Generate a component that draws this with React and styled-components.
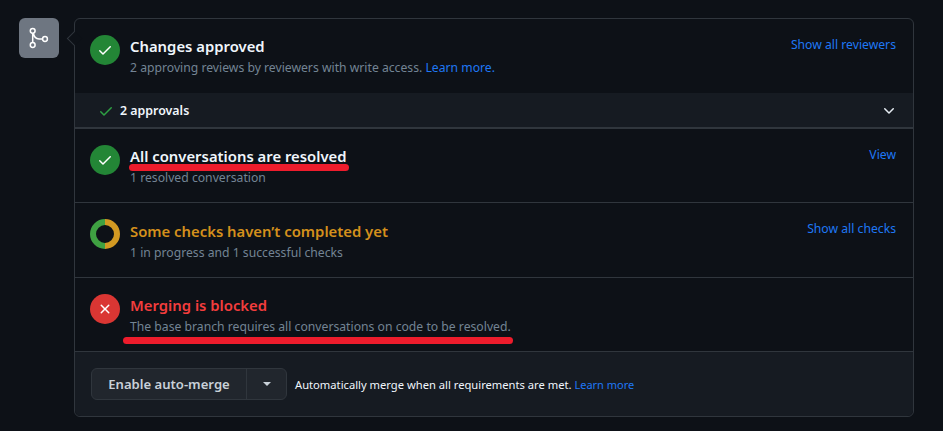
import React from "react";
import styled, { createGlobalStyle } from "styled-components";

const Global = createGlobalStyle`
  html, body { margin: 0; background: #0d1117; }
  body { font-family: "Noto Sans", "Open Sans", "Liberation Sans", sans-serif; overflow: hidden; }
  #root { width: 943px; height: 431px; }
`;

const Page = styled.div`
  display: flex;
  align-items: flex-start;
  gap: 15px;
  padding: 18px 29px 14px 19px;
  box-sizing: border-box;
  height: 431px;
  background: #0d1117;
`;

const BranchBadge = styled.div`
  width: 40px;
  height: 40px;
  flex: none;
  border-radius: 6px;
  background: #6e7681;
  display: flex;
  align-items: center;
  justify-content: center;
  color: #fff;
`;

const Panel = styled.div`
  position: relative;
  flex: 1;
  height: 399px;
  box-sizing: border-box;
  border: 1px solid #30363d;
  border-radius: 6px;
  display: flex;
  flex-direction: column;
  &::before {
    content: "";
    position: absolute;
    left: -6px;
    top: 14px;
    width: 10px;
    height: 10px;
    background: #0d1117;
    border-left: 1px solid #30363d;
    border-bottom: 1px solid #30363d;
    transform: rotate(45deg);
  }
`;

const Section = styled.div`
  position: relative;
  height: ${(p) => p.$h}px;
  flex: none;
  box-sizing: border-box;
  padding: 16px 17px 0 15px;
  display: flex;
  gap: 10px;
  border-bottom: ${(p) => (p.$border ? "1px solid #30363d" : "none")};
`;

const StatusDot = styled.div`
  width: 30px;
  height: 30px;
  flex: none;
  border-radius: 50%;
  background: ${(p) => p.$bg};
  display: flex;
  align-items: center;
  justify-content: center;
  color: #fff;
`;

const Body = styled.div`
  flex: 1;
  min-width: 0;
  padding-top: ${(p) => p.$top || 0}px;
`;

const Title = styled.div`
  font-size: 14.85px;
  font-weight: 600;
  line-height: 22px;
  color: ${(p) => p.$color || "#f0f6fc"};
`;

const Sub = styled.div`
  font-size: 12.2px;
  line-height: 18px;
  margin-top: 2px;
  color: #738494;
`;

const Link = styled.a`
  color: #1f78f5;
  font-size: ${(p) => p.$size || 12.2}px;
`;

const SideLink = styled(Link)`
  flex: none;
  line-height: 18px;
  margin-top: ${(p) => p.$mt || 0}px;
`;

const ApprovalsRow = styled.div`
  height: 36px;
  flex: none;
  box-sizing: border-box;
  background: #161b22;
  border-bottom: 2px solid #30363d;
  display: flex;
  align-items: center;
  padding: 1px 16px 0 23px;
  gap: 6px;
  color: #f0f6fc;
  font-size: 12.4px;
  font-weight: 600;
  & > span { flex: 1; }
`;

const GreenTick = styled.span`
  flex: none !important;
  display: flex;
  color: #2ea043;
`;

const Footer = styled.div`
  flex: 1;
  background: #161b22;
  border-radius: 0 0 6px 6px;
  display: flex;
  align-items: center;
  padding: 0 16px;
  gap: 8px;
  font-size: 11.2px;
  color: #f0f6fc;
`;

const SplitButton = styled.div`
  display: flex;
  height: 32px;
  box-sizing: border-box;
  border: 1px solid #30363d;
  border-radius: 6px;
  background: #21262d;
  color: #c9d1d9;
  font-size: 13.1px;
  font-weight: 600;
`;

const ButtonMain = styled.div`
  width: 154px;
  display: flex;
  align-items: center;
  justify-content: center;
  border-right: 1px solid #30363d;
`;

const Caret = styled.div`
  width: 39px;
  display: flex;
  align-items: center;
  justify-content: center;
  &::after {
    content: "";
    border-left: 4px solid transparent;
    border-right: 4px solid transparent;
    border-top: 4px solid #c9d1d9;
  }
`;

const Scribble = styled.div`
  position: absolute;
  left: ${(p) => p.$left}px;
  top: ${(p) => p.$top}px;
  width: ${(p) => p.$w}px;
  height: 7px;
  border-radius: 4px;
  background: #ed1c2c;
`;

const Check = ({ size = 16 }) => (
  <svg width={size} height={size} viewBox="0 0 16 16" fill="currentColor">
    <path d="M13.78 4.22a.75.75 0 0 1 0 1.06l-7.25 7.25a.75.75 0 0 1-1.06 0L2.22 9.28a.751.751 0 0 1 1.06-1.06L6 10.94l6.72-6.72a.75.75 0 0 1 1.06 0Z" />
  </svg>
);

const Cross = () => (
  <svg width="16" height="16" viewBox="0 0 16 16" fill="currentColor">
    <path d="M3.72 3.72a.75.75 0 0 1 1.06 0L8 6.94l3.22-3.22a.749.749 0 1 1 1.06 1.06L9.06 8l3.22 3.22a.749.749 0 1 1-1.06 1.06L8 9.06l-3.22 3.22a.751.751 0 0 1-1.06-1.06L6.94 8 3.72 4.78a.75.75 0 0 1 0-1.06Z" />
  </svg>
);

const Chevron = () => (
  <svg width="16" height="16" viewBox="0 0 16 16" fill="#e6edf3">
    <path d="M12.78 5.22a.749.749 0 0 1 0 1.06l-4.25 4.25a.749.749 0 0 1-1.06 0L3.22 6.28a.749.749 0 1 1 1.06-1.06L8 8.939l3.72-3.719a.749.749 0 0 1 1.06 0Z" />
  </svg>
);

const GitMerge = () => (
  <svg width="24" height="24" viewBox="0 0 24 24" fill="none" stroke="#fff" strokeWidth="1.5">
    <circle cx="5.7" cy="4.8" r="2.4" />
    <circle cx="5.7" cy="19" r="2.4" />
    <circle cx="18" cy="13" r="2.4" />
    <path d="M5.7 7.2v9.4M6.4 7.2c.5 3.4 2.6 5.8 5.6 5.8h3.6" />
  </svg>
);

const Ring = () => (
  <svg width="30" height="30" viewBox="0 0 30 30" fill="none" strokeWidth="6">
    <path d="M15 3a12 12 0 0 1 0 24" stroke="#d29922" />
    <path d="M15 27a12 12 0 0 1 0-24" stroke="#3fa142" />
  </svg>
);

export default function App() {
  return (
    <Page>
      <Global />
      <BranchBadge>
        <GitMerge />
      </BranchBadge>
      <Panel>
        <Section $h={74}>
          <StatusDot $bg="#238636"><Check /></StatusDot>
          <Body>
            <Title>Changes approved</Title>
            <Sub>
              2 approving reviews by reviewers with write access. <Link>Learn more.</Link>
            </Sub>
          </Body>
          <SideLink $mt={1}>Show all reviewers</SideLink>
        </Section>
        <ApprovalsRow>
          <GreenTick><Check /></GreenTick>
          <span>2 approvals</span>
          <Chevron />
        </ApprovalsRow>
        <Section $h={74} $border>
          <StatusDot $bg="#238636"><Check /></StatusDot>
          <Body>
            <Title>All conversations are resolved</Title>
            <Sub>1 resolved conversation</Sub>
          </Body>
          <SideLink $mt={1}>View</SideLink>
          <Scribble $left={54} $top={35} $w={220} />
        </Section>
        <Section $h={75} $border>
          <StatusDot $bg="transparent"><Ring /></StatusDot>
          <Body $top={1}>
            <Title $color="#d4901c">Some checks haven’t completed yet</Title>
            <Sub>1 in progress and 1 successful checks</Sub>
          </Body>
          <SideLink $mt={1}>Show all checks</SideLink>
        </Section>
        <Section $h={74} $border>
          <StatusDot $bg="#da3633"><Cross /></StatusDot>
          <Body>
            <Title $color="#f33d3d">Merging is blocked</Title>
            <Sub>The base branch requires all conversations on code to be resolved.</Sub>
          </Body>
          <Scribble $left={48} $top={59} $w={390} />
        </Section>
        <Footer>
          <SplitButton>
            <ButtonMain>Enable auto-merge</ButtonMain>
            <Caret />
          </SplitButton>
          <span>
            Automatically merge when all requirements are met. <Link $size={11}>Learn more</Link>
          </span>
        </Footer>
      </Panel>
    </Page>
  );
}
